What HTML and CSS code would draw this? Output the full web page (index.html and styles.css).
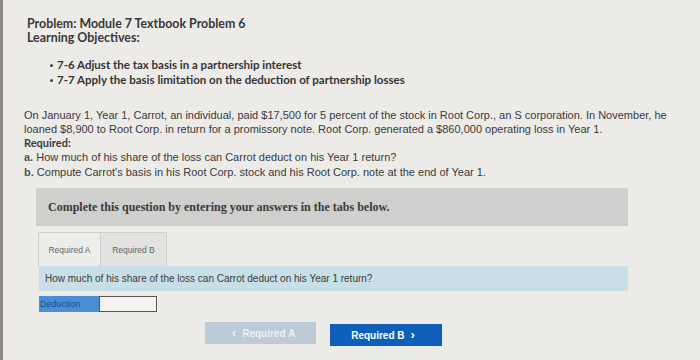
FILE: index.html
```html
<!DOCTYPE html>
<html lang="en">
<head>
<meta charset="utf-8">
<title>Module 7 Textbook Problem 6</title>
<link rel="stylesheet" href="styles.css">
</head>
<body>
<div class="page">
  <header class="head">
    <div class="title">Problem: Module 7 Textbook Problem 6</div>
    <div class="title">Learning Objectives:</div>
  </header>
  <ul class="objectives">
    <li>7-6 Adjust the tax basis in a partnership interest</li>
    <li>7-7 Apply the basis limitation on the deduction of partnership losses</li>
  </ul>
  <div class="problem">
    <p class="text">On January 1, Year 1, Carrot, an individual, paid $17,500 for 5 percent of the stock in Root Corp., an S corporation. In November, he loaned $8,900 to Root Corp. in return for a promissory note. Root Corp. generated a $860,000 operating loss in Year 1.</p>
    <div class="req-title">Required:</div>
    <div class="req"><b>a.</b> How much of his share of the loss can Carrot deduct on his Year 1 return?</div>
    <div class="req"><b>b.</b> Compute Carrot's basis in his Root Corp. stock and his Root Corp. note at the end of Year 1.</div>
  </div>
  <section class="work">
    <div class="instructions">Complete this question by entering your answers in the tabs below.</div>
    <div class="tabs">
      <div class="tab active">Required A</div>
      <div class="tab">Required B</div>
    </div>
    <div class="question">How much of his share of the loss can Carrot deduct on his Year 1 return?</div>
    <div class="answer-row">
      <div class="label">Deduction</div>
      <div class="input"></div>
    </div>
    <div class="nav">
      <div class="btn prev"><span class="chev">&lsaquo;</span> Required A</div>
      <div class="btn next">Required B <span class="chev">&rsaquo;</span></div>
    </div>
  </section>
</div>
</body>
</html>
```
FILE: styles.css
```css
html, body {
  margin: 0;
  padding: 0;
}
body {
  background: #ecebe8;
  color: #333;
  font-family: "Liberation Sans", Arial, sans-serif;
}
.page {
  border-left: 3px solid #8d8883;
  height: 360px;
  box-sizing: border-box;
  padding: 17px 0 0 24px;
}
.title {
  font-family: Lato, "Open Sans", sans-serif;
  font-weight: 700;
  font-size: 12.4px;
  line-height: 14px;
  color: #383838;
}
.objectives {
  list-style: none;
  margin: 13px 0 0 0;
  padding: 0 0 0 23px;
}
.objectives li {
  font-family: Lato, "Open Sans", sans-serif;
  font-weight: 700;
  font-size: 11.5px;
  line-height: 14.5px;
  color: #343434;
  position: relative;
  padding-left: 7px;
}
.objectives li::before {
  content: "";
  position: absolute;
  left: 0;
  top: 6px;
  width: 3px;
  height: 3px;
  border-radius: 50%;
  background: #444;
}
.problem {
  margin: 21px 0 0 -3px;
  font-size: 11px;
  line-height: 14px;
  color: #3a3a3a;
  padding-right: 20px;
}
.text {
  margin: 0;
}
.req-title {
  font-family: Lato, "Open Sans", sans-serif;
  font-weight: 700;
  font-size: 11px;
}
.req {
  line-height: 14.5px;
}
.req b {
  font-weight: 700;
  color: #555;
}
.work {
  margin: 9px 0 0 9px;
  width: 592px;
}
.instructions {
  background: #cfcfcd;
  height: 38px;
  display: flex;
  align-items: center;
  padding-left: 12px;
  font-family: "Liberation Serif", "DejaVu Serif", serif;
  font-weight: 700;
  font-size: 12px;
  color: #3a3a3a;
}
.tabs {
  display: flex;
  margin: 6px 0 0 2px;
  height: 34px;
}
.tab {
  width: 62px;
  box-sizing: border-box;
  border: 1px solid #cfcfcd;
  border-bottom: none;
  background: #e2e2e0;
  font-size: 8.5px;
  color: #666;
  display: flex;
  align-items: center;
  justify-content: center;
}
.tab.active {
  background: #ededeb;
  width: 63px;
}
.tab + .tab {
  width: 66px;
  border-left: none;
}
.question {
  margin-left: 3px;
  height: 25px;
  background: #c8dfe7;
  display: flex;
  align-items: center;
  padding-left: 6px;
  font-size: 10px;
  color: #3a3a3a;
}
.answer-row {
  display: flex;
  margin: 5px 0 0 3px;
  height: 16px;
}
.label {
  width: 60px;
  background: #4a8fd6;
  color: #1e4a85;
  font-size: 9px;
  display: flex;
  align-items: center;
  padding-left: 1px;
  box-sizing: border-box;
}
.input {
  width: 58px;
  background: #f4f4f3;
  border: 1px solid #555;
  box-sizing: border-box;
}
.nav {
  display: flex;
  margin: 10px 0 0 169px;
  gap: 14px;
}
.btn {
  width: 111px;
  height: 22px;
  display: flex;
  align-items: center;
  justify-content: center;
  font-size: 10px;
  font-weight: 700;
  color: #fff;
}
.btn.prev {
  background: #bccbd5;
  color: #eef2f5;
}
.btn.next {
  width: 112px;
  background: #0d5fb8;
  margin-top: 2px;
}
.chev {
  font-size: 13px;
  line-height: 1;
  margin: 0 6px;
  position: relative;
  top: -1px;
}
```
